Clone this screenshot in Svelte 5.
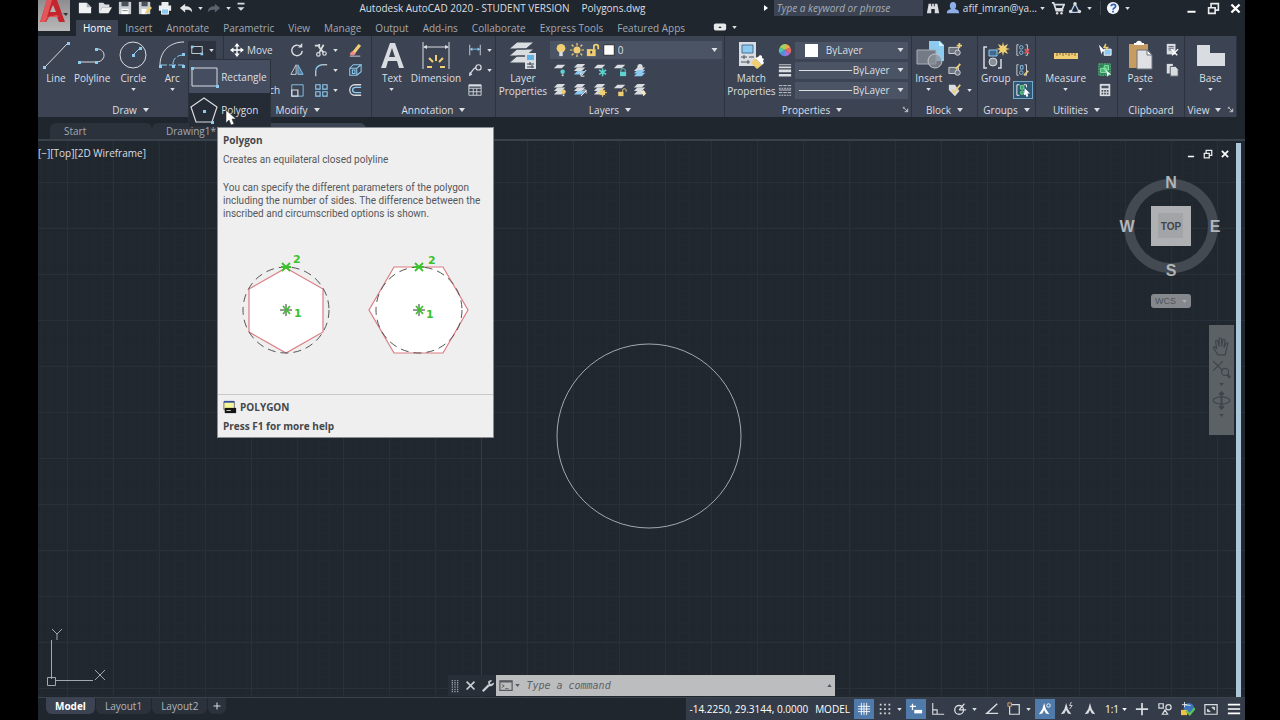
<script>
    const W = "#d9dce0";
    const B = "#8ccaf0";
    const Y = "#f0cf74";

    const sheet = (y, c = W) => `<path d="M5 ${y}h9l-4 4H1z" fill="${c}"/>`;
    const dot = (x, y) => `<rect x="${x - 1}" y="${y - 1}" width="3" height="3" fill="${B}"/>`;
    const bulb = (x, y, c) => `<circle cx="${x}" cy="${y}" r="2.6" fill="${c}"/><path d="M${x - 1} ${y + 3}h2v2h-2z" fill="${W}"/>`;

    // large icons are drawn on a 30 unit grid
    const large = {
        line: `<path d="M3 28 27 3" stroke="${W}"/>${dot(3, 27)}${dot(27, 3)}`,
        polyline: `<path d="M3 22h17M19 9c10-1 11 12 1 13" fill="none" stroke="${W}"/>${dot(2, 22)}${dot(19, 22)}${dot(19, 9)}`,
        circle: `<circle cx="15" cy="15" r="13" fill="none" stroke="${W}"/><path d="m15 15 7-7" stroke="${B}"/>${dot(15, 15)}${dot(22, 8)}`,
        arc: `<path d="M3 25C3 11 13 2 27 2" fill="none" stroke="${W}"/><path d="M3 25h24M16 24c0-5 4-9 10-9" stroke="${B}" fill="none" stroke-dasharray="7 2"/>${dot(3, 26)}${dot(16, 26)}${dot(26, 26)}${dot(26, 14)}`,
        text: `<path d="M4 28 13 3h5l9 25h-5l-2-7H11l-2 7zM12 17h6l-3-9z" fill="${W}"/>`,
        dimension: `<path d="M2 2v27M28 2v27M3 7h24" stroke="${W}" fill="none"/><path d="m2 7 4-2v4zM28 7l-4-2v4z" fill="${W}"/><path d="M6 27h5M19 27h5M8 18l4 4M22 18l-4 4M15 15v6" stroke="${Y}" stroke-width="2"/>`,
        layers: `<path d="M9 2h17l-8 7H1zM9 9h17l-8 7H1zM9 16h17l-8 7H1z" fill="${W}" stroke="#3c4453"/><path d="M17 13h11v16H17z" fill="${W}"/><path d="M19 15h7v5h-7z" fill="#5fb2e2"/><path d="M19 24h7M19 27h7M22 22v3M24 25v3" stroke="#3c4453"/>`,
        match: `<path d="M3 2h17v24H3z" fill="${W}"/><path d="M6 5h11v8H6z" fill="${B}" stroke="#47719a"/><path d="M5 17h6M13 17h5M5 22h9M8 15v4M12 20v4" stroke="#4b5260"/><path d="m15 23 4-5 7 7-5 4z" fill="${Y}"/><path d="m19 18 3-1 2-2 2 1v2l2 1-1 2 1 2-2 2z" fill="#fff"/>`,
        insert: `<path d="M15 1h11l4 4v16H15z" fill="${B}"/><path d="M25 1v5h5" fill="#d8eefb"/><path d="M3 10h19v14H3z" fill="#747b86" stroke="#a9afb7"/><circle cx="21" cy="21" r="7" fill="#8b919a" fill-opacity=".7" stroke="#c1c5ca"/>`,
        group: `<path d="M6 7H3v21h3M17 28h3v-9" fill="none" stroke="${W}" stroke-width="1.5"/><path d="M8 10h8v6H8z" fill="#42688c" stroke="${B}"/><circle cx="12" cy="22" r="4" fill="#8a9099" stroke="${W}"/><path d="m22 2 1 4 4-2-2 4 4 1-4 1 2 4-4-2-1 4-1-4-4 2 2-4-4-1 4-1-2-4 4 2z" fill="${Y}"/>`,
        measure: `<path d="M3 13h24v6H3z" fill="${Y}"/><path d="M6 13v3M9 13v2M12 13v3M15 13v2M18 13v3M21 13v2M24 13v3" stroke="#7e6534"/>`,
        paste: `<path d="M4 4h19v24H4z" fill="#c79c62"/><path d="M9 5V3h2c1-3 5-3 6 0h2v2z" fill="#fff"/><path d="M12 10h11l4 5v14H12z" fill="#dfe1e5" stroke="#6d737c"/><path d="M22 10v5h5z" fill="#fff" stroke="#6d737c"/>`,
        base: `<path d="M1 5h13v8h15v13H1z" fill="${W}"/>`,
        rectangle: `<path d="M3 6h25v18H3z" fill="none" stroke="${W}"/>${dot(3, 6)}${dot(28, 24)}`,
        polygon: `<path d="M15 3 28 12 23 27H7L2 12z" fill="none" stroke="${W}" stroke-width="1.2"/>${dot(15, 16)}${dot(23, 27)}`
    };

    // small icons are drawn on a 16 unit grid
    const small = {
        fresh: `<path d="M1 2h9l5 5v7H1z" fill="#eef0f1"/><path d="M10 2v5h5" fill="#aab0b8"/>`,
        open: `<path d="M1 2h5l2 2h5v3H5l-3 6H1z" fill="${W}"/><path d="M5 7h11l-4 7H1z" fill="#eceef0"/>`,
        save: `<path d="M1 1h14v14H1z" fill="#c9ccd1"/><path d="M4 1h8v5H4z" fill="#4b515b"/><path d="M4 9h8v6H4z" fill="#fff"/><path d="M5 11h6" stroke="#777"/>`,
        saveas: `<path d="M1 1h13v14H1z" fill="#c9ccd1"/><path d="M4 1h7v5H4z" fill="#4b515b"/><path d="M4 9h6v6H4z" fill="#fff"/><path d="m8 15 1-4 5-5 2 2-5 5z" fill="${Y}"/>`,
        print: `<path d="M4 1h8v4H4zM1 5h14v6H1z" fill="#eceef0"/><path d="M4 9h8v6H4z" fill="${B}" stroke="#fff"/>`,
        undo: `<path d="M1 8 7 3v3c5 0 8 2 8 7-2-3-4-3-8-3v3z" fill="#e4e6e8"/>`,
        redo: `<path d="M15 8 9 3v3c-5 0-8 2-8 7 2-3 4-3 8-3v3z" fill="#5b626d"/>`,
        custom: `<path d="M4 3h8" stroke="${W}" stroke-width="2"/><path d="M4 7h8l-4 4z" fill="${W}"/>`,
        binoculars: `<path d="M3 3h3v3h1V3h2v3h1V3h3l2 11h-5V9H6v5H1z" fill="${W}"/>`,
        user: `<path d="M8 1c5 0 4 7 2 8 4 1 5 2 5 5H1c0-3 1-4 5-5-2-1-3-8 2-8z" fill="#8eaee9"/>`,
        cart: `<path d="M1 2h2l3 9h8M4 4h11l-2 5H6" fill="none" stroke="${W}" stroke-width="2"/><circle cx="7" cy="14" r="1.4" fill="${W}"/><circle cx="12" cy="14" r="1.4" fill="${W}"/>`,
        exchange: `<path d="M8 3 3 13h10z" fill="none" stroke="#b8cdf2" stroke-width="1.500"/><circle cx="8" cy="3" r="2" fill="${W}"/><circle cx="3" cy="12" r="2" fill="${W}"/><circle cx="13" cy="12" r="2" fill="${W}"/>`,
        help: `<circle cx="8" cy="8" r="7" fill="#f4f6fa"/><path d="M6 6c0-3 5-3 5 0 0 2-3 2-3 4M8 11v2" fill="none" stroke="#3360b8" stroke-width="2"/>`,
        min: `<path d="M3 12h10" stroke="#fff" stroke-width="2.4"/>`,
        restore: `<path d="M2 7h8v7H2zM5 7V2h9v8h-4" fill="none" stroke="#e8eaec" stroke-width="2"/>`,
        close: `<path d="m3 3 10 10M13 3 3 13" stroke="#fff" stroke-width="2.8"/>`,
        pill: `<rect x="1" y="4" width="14" height="8" rx="2" fill="#e6e8ea"/><path d="M6 9h4L8 7z" fill="#222"/>`,
        rect: `<path d="M2 4h12v8H2z" fill="none" stroke="${W}"/>${dot(2, 4)}${dot(13, 12)}`,
        move: `<path d="M8 2v12M2 8h12" stroke="#fff" stroke-width="1.5"/><path d="m8 0 3 4H5zM8 16l3-4H5zM0 8l4-3v6zM16 8l-4-3v6z" fill="#fff"/>`,
        copy: `<circle cx="6" cy="6" r="4" fill="none" stroke="${W}"/><circle cx="10" cy="10" r="4" fill="none" stroke="${B}"/>`,
        stretch: `<path d="M2 4h8v8H2zM10 8h5" fill="none" stroke="${B}"/>`,
        rotate: `<path d="M12 4A6 6 0 1 0 14 9" fill="none" stroke="${W}" stroke-width="1.6"/><path d="M9 5h5V0z" fill="${W}"/>`,
        trim: `<path d="M6 1v4l5 6M11 2 6 11M1 3h6" fill="none" stroke="${W}" stroke-width="2"/><circle cx="5" cy="13" r="2" fill="none" stroke="${W}" stroke-width="1.4"/><circle cx="12" cy="12" r="2" fill="none" stroke="${W}" stroke-width="1.4"/>`,
        erase: `<path d="m5 10 7-9 3 2-7 9z" fill="${Y}"/><path d="m2 12 3-3 4 3-2 2H3z" fill="#ef8b83"/><path d="M2 15h12" stroke="${W}"/>`,
        mirror: `<path d="M7 2v11H1z" fill="none" stroke="${W}"/><path d="M9 2v11h6z" fill="#4e7ea5" stroke="${B}"/>`,
        fillet: `<path d="M2 15V9" stroke="${W}" stroke-width="1.3"/><path d="M2 9c0-4 3-6 7-7" fill="none" stroke="${B}" stroke-width="1.5"/><path d="M9 2h6" stroke="${W}" stroke-width="1.3"/>`,
        box: `<path d="M2 6h8v8H2zM2 6l4-4h9l-5 4M10 14l5-4V2M5 8h3v4H5z" fill="none" stroke="${B}" stroke-width="1.2"/>`,
        scale: `<path d="M2 2h13v13H2z" fill="none" stroke="${B}"/><path d="M2 8h7v7H2z" fill="none" stroke="${W}" stroke-width="1.4"/>`,
        array: `<path d="M2 2h5v5H2zM10 2h5v5h-5zM2 10h5v5H2zM10 10h5v5h-5z" fill="none" stroke="${B}" stroke-width="1.3"/>`,
        offset: `<path d="M15 2H8c-8 0-8 12 0 12h7" fill="none" stroke="${W}" stroke-width="1.5"/><path d="M15 5H9c-5 0-5 6 0 6h6" fill="none" stroke="${B}" stroke-width="1.5"/>`,
        linear: `<path d="M2 2v12M14 2v12" stroke="${W}"/><path d="M3 7h10" stroke="${B}"/><path d="m2 7 3-2v4zM14 7l-3-2v4z" fill="${B}"/>`,
        leader: `<circle cx="12" cy="5" r="3" fill="none" stroke="${W}" stroke-width="1.4"/><path d="M9 5C6 6 5 9 2 13" fill="none" stroke="${W}" stroke-width="1.4"/><path d="m1 15 1-5 3 3z" fill="${W}"/>`,
        table: `<path d="M1 2h14v12H1zM1 6h14M1 10h14M6 6v8M10 6v8" fill="none" stroke="${W}"/><path d="M1 2h14v2H1z" fill="${W}"/>`,
        bulb: `<circle cx="8" cy="6" r="5" fill="${Y}"/><path d="M6 10h4v5H6z" fill="${W}"/>`,
        sun: `<circle cx="8" cy="8" r="4" fill="${Y}"/><path d="M8 0v3M8 13v3M0 8h3M13 8h3M2 2l2 2M12 12l2 2M14 2l-2 2M4 12l-2 2" stroke="${Y}" stroke-width="1.4"/>`,
        unlock: `<path d="M1 7h10v8H1z" fill="${Y}"/><path d="M9 7V4c0-3 5-3 5 0v3" fill="none" stroke="${Y}" stroke-width="2"/><path d="M6 9v3" stroke="#3c4453" stroke-width="2"/>`,
        swatch: `<path d="M2 2h12v12H2z" fill="#fff" stroke="#222"/>`,
        lyOff: sheet(2) + bulb(11, 10, "#5fd2cf"),
        lyIso: sheet(1) + sheet(5) + sheet(9, B) + `<path d="m15 8-5 6M9 11v4h4" stroke="#fff" fill="none"/>`,
        lyFreeze: sheet(2) + `<path d="M11 6v9M7 8l8 5M15 8l-8 5" stroke="#5fd2cf" stroke-width="1.8"/>`,
        lyLock: sheet(2) + `<path d="M8 10h7v5H8z" fill="#5fd2cf"/><path d="M9 10V8c0-2 5-2 5 0v2" fill="none" stroke="#5fd2cf"/>`,
        lyCurrent: sheet(5) + sheet(8, B) + sheet(11, B) + `<circle cx="8" cy="4" r="3" fill="${W}"/>`,
        lyOn: sheet(1) + sheet(5) + sheet(9) + bulb(12, 10, Y),
        lyUniso: sheet(1) + sheet(5) + sheet(9, B) + `<path d="m9 15 6-6M11 8h4v4" stroke="#fff" fill="none"/>`,
        lyThaw: sheet(1) + sheet(5) + sheet(9) + `<circle cx="11" cy="11" r="3" fill="${Y}"/><path d="M11 6v10M6 11h10M8 8l6 6M14 8l-6 6" stroke="${Y}"/>`,
        lyUnlock: sheet(2) + `<path d="M6 10h6v5H6z" fill="${Y}"/><path d="M11 10V8c0-2 4-2 4 0v2" fill="none" stroke="${Y}"/>`,
        lyMatch: sheet(1) + sheet(5) + sheet(9) + `<path d="m9 9 3-1 3 4-3 3z" fill="#f5e7c2"/>`,
        wheel: `<path d="M8 8V1a7 7 0 0 1 6 4z" fill="#f2a64e"/><path d="m8 8 6-3a7 7 0 0 1 0 7z" fill="#e8695d"/><path d="m8 8 6 4a7 7 0 0 1-6 3z" fill="#b46ad0"/><path d="M8 8v7a7 7 0 0 1-6-3z" fill="#5a8be0"/><path d="m8 8-6 4a7 7 0 0 1 0-7z" fill="#4fc3b5"/><path d="M8 8 2 5a7 7 0 0 1 6-4z" fill="#9ed45f"/>`,
        weights: `<path d="M1 2h14" stroke="${W}"/><path d="M1 5h14" stroke="${W}" stroke-width="2"/><path d="M1 9h14M1 14h14" stroke="${W}" stroke-width="3"/>`,
        dashes: `<path d="M1 3h14M1 11h14" stroke="${W}" stroke-dasharray="4 1"/><path d="M1 6h14M1 14h14" stroke="${W}" stroke-dasharray="2 1"/><path d="M1 8h14" stroke="${W}"/>`,
        blkNew: `<path d="M1 5h11v7H1z" fill="#6f7681" stroke="${W}"/><circle cx="11" cy="11" r="3" fill="#6f7681" stroke="${W}"/><path d="M13 0v6M10 3h6" stroke="${Y}" stroke-width="2"/>`,
        blkEdit: `<path d="M1 5h11v7H1z" fill="#6f7681" stroke="${W}"/><circle cx="11" cy="11" r="3" fill="#6f7681" stroke="${W}"/><path d="m9 7 5-6" stroke="${Y}" stroke-width="2"/>`,
        blkAttr: `<path d="M1 2h7l5 7-5 6-7-7z" fill="${W}"/><path d="m5 8 2 3 7-9" stroke="${Y}" stroke-width="2" fill="none"/>`,
        ungroup: `<path d="M3 2H1v12h2M11 2h2v12h-2" fill="none" stroke="${W}"/><circle cx="6" cy="5" r="2" fill="none" stroke="${B}"/><circle cx="6" cy="11" r="2" fill="none" stroke="${B}"/><path d="m10 7 5 5M15 7l-5 5" stroke="#e2565c" stroke-width="2"/>`,
        grpEdit: `<path d="M3 2H1v12h2M10 2h2v12h-2" fill="none" stroke="${W}"/><path d="M5 3h3v4H5z" fill="none" stroke="${B}"/><circle cx="6" cy="11" r="2" fill="none" stroke="${B}"/><path d="m9 14 5-5" stroke="${Y}" stroke-width="2"/>`,
        grpSel: `<path d="M4 2H1v12h3M9 2h3v3" fill="none" stroke="#fff"/><path d="M5 3h4v4H5z" fill="#3b9d61" stroke="#78dd93"/><circle cx="7" cy="11" r="2" fill="#3b9d61" stroke="#78dd93"/><path d="m10 6 6 6h-3l1 3-2 1-1-3-2 1z" fill="#fff"/>`,
        quick: `<path d="m1 2 7 7-3 1-1 3z" fill="#fff"/><path d="M7 7h8v7H7z" fill="${B}" stroke="#fff"/><path d="m9 1-2 4h4L9 8" fill="none" stroke="${Y}" stroke-width="1.6"/>`,
        selAll: `<path d="M1 1h13v13H1z" fill="#2f7c55" stroke="#5bd68a" stroke-dasharray="2 1"/><path d="M3 6h6v5H3zM7 3h5v5H7z" fill="#48b273" stroke="#8cefb0"/><path d="m9 8 6 5h-3l-1 3z" fill="#fff"/>`,
        calc: `<path d="M2 1h12v14H2z" fill="${W}"/><path d="M4 3h8v3H4zM4 8h2v2H4zM7 8h2v2H7zM10 8h2v2h-2zM4 11h2v2H4zM7 11h2v2H7zM10 11h2v2h-2z" fill="#4a5160"/>`,
        cut: `<path d="M2 1h10v12H2z" fill="${W}"/><path d="M4 4h6M4 6h6M4 8h4" stroke="#555c68"/><path d="m7 7 7 7M15 7l-7 7" stroke="#fff" stroke-width="1.5"/>`,
        clipCopy: `<path d="M2 1h7v11H2z" fill="${W}"/><path d="M6 4h6l3 3v8H6z" fill="${W}" stroke="#4a5160"/>`,
        launch: `<path d="M3 3h3M3 3v3M5 5l7 7M13 6v7H6" fill="none" stroke="${W}" stroke-width="2"/>`,
        wrench: `<path d="m2 14 7-7" stroke="#c9cdd2" stroke-width="2.6"/><path d="M8 3c2-2 4-2 5-1l-3 2 1 2 4-2c0 3-3 5-6 4z" fill="#c9cdd2"/>`,
        x: `<path d="m3 3 9 9M12 3l-9 9" stroke="#c9cdd2" stroke-width="2"/>`,
        grip: `<path d="M5 1v14M8 1v14M11 1v14" stroke="#9aa0a8" stroke-width="1.5" stroke-dasharray="1.5 1"/>`,
        prompt: `<path d="M1 2h14v11H1z" fill="none" stroke="#565b61" stroke-width="1.4"/><path d="M1 2h14v2H1z" fill="#565b61"/><path d="m3 6 3 2-3 2M7 11h4" fill="none" stroke="#565b61"/>`,
        grid: `<path d="M5 1v14M8 1v14M11 1v14M1 5h14M1 8h14M1 11h14" stroke="#fff"/>`,
        snap: `<path d="M2 3h13M2 8h13M2 13h13" stroke="${W}" stroke-width="2" stroke-dasharray="2 3"/>`,
        dynamic: `<path d="M4 2v7M1 5h7" stroke="#fff" stroke-width="1.5"/><path d="M6 9h9v4H6z" fill="#fff"/>`,
        ortho: `<path d="M2 1v13h13M2 9h5v5" fill="none" stroke="${W}" stroke-width="1.3"/>`,
        polar: `<circle cx="7" cy="9" r="5" fill="none" stroke="${W}" stroke-width="1.5"/><path d="M7 9h8M7 9l6-7" stroke="${W}" stroke-width="1.4"/>`,
        track: `<path d="M14 2 2 13h13" fill="none" stroke="${W}" stroke-width="1.6"/>`,
        osnap: `<path d="M3 3h11v11H3z" fill="none" stroke="${W}" stroke-width="1.4"/><path d="M1 1h4v4H1z" fill="#3c4453" stroke="#e2a468"/>`,
        annoVis: `<path d="m7 1 2 7 4 6-4-1-2-4-2 4-4 1 4-6z" fill="#fff"/><circle cx="12" cy="4" r="2" fill="none" stroke="#fff"/>`,
        annoAuto: `<path d="m7 1 2 7 4 6-4-1-2-4-2 4-4 1 4-6z" fill="${W}"/><path d="m13 0-2 4h3l-3 4" stroke="${W}" fill="none"/>`,
        annoScale: `<path d="m8 1 2 7 4 6-4-1-2-4-2 4-4 1 4-6z" fill="${W}"/>`,
        plus: `<path d="M8 1v14M1 8h14" stroke="${W}" stroke-width="2"/>`,
        shapes: `<path d="M1 2h5v5H1zM8 9l3 5H5z" fill="none" stroke="${W}" stroke-width="1.4"/><circle cx="12" cy="6" r="3" fill="none" stroke="${W}" stroke-width="1.4"/>`,
        perf: `<circle cx="9" cy="7" r="6" fill="#3a74bb"/><path d="M4 0v6M1 3h6M4 3l7 1" stroke="#e8eef6"/><path d="M0 9h7v6H0z" fill="#f3bf45"/><path d="m6 10 4 4 6-7" fill="none" stroke="#5fc25d" stroke-width="2.6"/>`,
        screen: `<path d="M1 3h14v11H1z" fill="none" stroke="${W}" stroke-width="1.4"/><path d="M4 11V8l3 3zM12 6v3L9 6z" fill="${W}" stroke="${W}"/>`,
        menu: `<path d="M1 3h14M1 8h14M1 13h14" stroke="#fff" stroke-width="1.8"/>`,
        hand: `<path d="m5 15-4-6c0-1 2-1 3 1L3 4c0-2 2-1 2 0l1 4V2c0-2 2-1 2 0v6l1-5c0-2 2-1 2 0l-1 6 2-4c1-1 2 0 1 2l-2 8z" fill="none" stroke="#3e444b"/>`,
        zoom: `<path d="m1 1 8 8M9 1 1 9" stroke="#3e444b"/><circle cx="11" cy="10" r="3" fill="none" stroke="#3e444b"/><path d="m13 12 2 3" stroke="#3e444b" stroke-width="2"/>`,
        orbit: `<path d="M8 1v14M6 3l2-2 2 2M6 13l2 2 2-2" fill="none" stroke="#3e444b" stroke-width="1.6"/><ellipse cx="8" cy="8" rx="7" ry="3" fill="none" stroke="#3e444b"/>`,
        cmd: `<path d="M1 2h12v9H1z" fill="#f5f79a" stroke="#667"/><path d="M1 1h12v2H1z" fill="#35509a"/><path d="M2 9h13v6H2z" fill="#151515"/><path d="M4 12h5" stroke="#ddd"/>`
    };

    const fileTools = ["fresh", "open", "save", "saveas", "print"];
    const ribbonTabs = ["Home", "Insert", "Annotate", "Parametric", "View", "Manage", "Output", "Add-ins", "Collaborate", "Express Tools", "Featured Apps"];
    const layerTools = [
        ["lyOff", "lyIso", "lyFreeze", "lyLock", "lyCurrent"],
        ["lyOn", "lyUniso", "lyThaw", "lyUnlock", "lyMatch"]
    ];
    const lineProps = [
        { icon: "weights", label: "Lineweight" },
        { icon: "dashes", label: "Linetype" }
    ];

    let activeTab = $state("Home");
    let activeLayout = $state("Model");
    let command = $state("");
    let query = $state("");
</script>

{#snippet sm(name)}
    <svg class="sm" viewBox="0 0 16 16" aria-hidden="true">{@html small[name]}</svg>
{/snippet}

{#snippet caret()}
    <svg class="caret" viewBox="0 0 6 4" aria-hidden="true"><path d="M0 0h6L3 4z" fill="currentColor" /></svg>
{/snippet}

{#snippet big(icon, label, more)}
    <button class="big">
        <svg class="lg" viewBox="0 0 30 30" aria-hidden="true">{@html large[icon]}</svg>
        <span>{label}</span>
        {#if more}{@render caret()}{/if}
    </button>
{/snippet}

{#snippet tool(name, more, on)}
    <button class="tool" class:on class:more aria-label={name}>
        {@render sm(name)}
        {#if more}{@render caret()}{/if}
    </button>
{/snippet}

{#snippet title(text, more, launcher)}
    <div class="panel-title">
        <button>{text}{#if more}<svg class="drop" viewBox="0 0 6 4" aria-hidden="true"><path d="M0 0h6L3 4z" fill="currentColor" /></svg>{/if}</button>
        {#if launcher}
            <button class="launcher" aria-label="{text} settings">{@render sm("launch")}</button>
        {/if}
    </div>
{/snippet}

<div class="app">
    <header>
        <button class="logo" aria-label="Application menu">
            <svg viewBox="0 0 32 31" aria-hidden="true">
                <path d="M2 22 9 0h10l8 22h-6l-2-5h-8l-3 5z" fill="#c4262e" />
                <path d="M2 22 9 0h5L9 17l10-2 2 2H10l-3 5z" fill="#e4555a" />
                <path d="m12 12 3-7 3 7z" fill="#b9b4b4" />
                <path d="M25 13h5l-2 3z" fill="#333" />
            </svg>
        </button>
        <div class="titlebar">
            <div class="quick">
                {#each fileTools as name}{@render tool(name)}{/each}
                {@render tool("undo", true)}
                {@render tool("redo", true)}
                {@render tool("custom")}
            </div>
            <div class="caption">
                <span>Autodesk AutoCAD 2020 - STUDENT VERSION</span>
                <span>Polygons.dwg</span>
            </div>
            <svg class="expand" viewBox="0 0 4 6" aria-hidden="true"><path d="M0 0v6l4-3z" fill="#fff" /></svg>
            <input class="search" type="text" aria-label="Search" placeholder="Type a keyword or phrase" bind:value={query} />
            <div class="account">
                {@render tool("binoculars")}
                <button class="user">{@render sm("user")}<span>afif_imran@ya...</span>{@render caret()}</button>
                {@render tool("cart")}
                {@render tool("exchange", true)}
                <i></i>
                {@render tool("help", true)}
            </div>
            <div class="window">
                {@render tool("min")}{@render tool("restore")}{@render tool("close")}
            </div>
        </div>
        <nav class="tabs">
            {#each ribbonTabs as tab}
                <button class:active={tab === activeTab} onclick={() => (activeTab = tab)}>{tab}</button>
            {/each}
            <div class="pill">{@render tool("pill", true)}</div>
        </nav>
    </header>

    <section class="ribbon">
        <div class="panel">
            <div class="body draw">
                {@render big("line", "Line")}
                {@render big("polyline", "Polyline")}
                {@render big("circle", "Circle", true)}
                {@render big("arc", "Arc", true)}
                <div class="shape">
                    {@render tool("rect", true)}
                    <div class="menu">
                        <button><svg class="lg" viewBox="0 0 30 30" aria-hidden="true">{@html large.rectangle}</svg>Rectangle</button>
                        <button class="hover"><svg class="lg" viewBox="0 0 30 30" aria-hidden="true">{@html large.polygon}</svg>Polygon</button>
                        <svg class="pointer" viewBox="0 0 12 18" aria-hidden="true">
                            <path d="M1 1v13l3-3 2 5 3-1-2-5h4z" fill="#fff" stroke="#333" stroke-width=".6" />
                        </svg>
                    </div>
                </div>
            </div>
            {@render title("Draw", true)}
        </div>

        <div class="panel">
            <div class="body modify">
                <div class="col named">
                    <button>{@render sm("move")}Move</button>
                    <button aria-label="Copy">{@render sm("copy")}</button>
                    <button>{@render sm("stretch")}Stretch</button>
                </div>
                <div class="col">{@render tool("rotate")}{@render tool("mirror")}{@render tool("scale")}</div>
                <div class="col">{@render tool("trim", true)}{@render tool("fillet", true)}{@render tool("array", true)}</div>
                <div class="col">{@render tool("erase")}{@render tool("box")}{@render tool("offset")}</div>
            </div>
            {@render title("Modify", true)}
        </div>

        <div class="panel">
            <div class="body annotation">
                {@render big("text", "Text", true)}
                {@render big("dimension", "Dimension")}
                <div class="col">{@render tool("linear", true)}{@render tool("leader", true)}{@render tool("table")}</div>
            </div>
            {@render title("Annotation", true)}
        </div>

        <div class="panel">
            <div class="body layers">
                {@render big("layers", "Layer Properties")}
                <div class="col">
                    <div class="combo layer">
                        {@render sm("bulb")}{@render sm("sun")}{@render sm("unlock")}{@render sm("swatch")}
                        <select aria-label="Layer"><option>0</option></select>
                        {@render caret()}
                    </div>
                    {#each layerTools as row}
                        <div class="row">{#each row as name}{@render tool(name)}{/each}</div>
                    {/each}
                </div>
            </div>
            {@render title("Layers", true)}
        </div>

        <div class="panel">
            <div class="body properties">
                {@render big("match", "Match Properties")}
                <div class="col">
                    <div class="prop">
                        {@render sm("wheel")}
                        <div class="combo">
                            <span class="white"></span>
                            <select aria-label="Object color"><option>ByLayer</option></select>
                            {@render caret()}
                        </div>
                    </div>
                    {#each lineProps as prop}
                        <div class="prop">
                            {@render sm(prop.icon)}
                            <div class="combo">
                                <span class="stroke"></span>
                                <select aria-label={prop.label}><option>ByLayer</option></select>
                                {@render caret()}
                            </div>
                        </div>
                    {/each}
                </div>
            </div>
            {@render title("Properties", true, true)}
        </div>

        <div class="panel">
            <div class="body block">
                {@render big("insert", "Insert", true)}
                <div class="col">{@render tool("blkNew")}{@render tool("blkEdit")}{@render tool("blkAttr", true)}</div>
            </div>
            {@render title("Block", true)}
        </div>

        <div class="panel">
            <div class="body groups">
                {@render big("group", "Group")}
                <div class="col">{@render tool("ungroup")}{@render tool("grpEdit")}{@render tool("grpSel", false, true)}</div>
            </div>
            {@render title("Groups", true)}
        </div>

        <div class="panel">
            <div class="body utilities">
                {@render big("measure", "Measure", true)}
                <div class="col">{@render tool("quick")}{@render tool("selAll")}{@render tool("calc")}</div>
            </div>
            {@render title("Utilities", true)}
        </div>

        <div class="panel">
            <div class="body clipboard">
                {@render big("paste", "Paste", true)}
                <div class="col">{@render tool("cut")}{@render tool("clipCopy")}</div>
            </div>
            {@render title("Clipboard")}
        </div>

        <div class="panel">
            <div class="body">
                {@render big("base", "Base", true)}
            </div>
            {@render title("View", true, true)}
        </div>
    </section>

    <nav class="files">
        <button>Start</button>
        <button>Drawing1*</button>
        <button class="current" aria-label="Polygons"></button>
    </nav>

    <main>
        <svg class="drawing" aria-hidden="true">
            <defs>
                <pattern id="minor" x="29" y="41" width="9" height="9" patternUnits="userSpaceOnUse">
                    <path d="M0 .5h9M.5 0v9" stroke="#222931" />
                </pattern>
                <pattern id="major" x="29" y="41" width="46" height="46" patternUnits="userSpaceOnUse">
                    <path d="M0 .5h46M.5 0v46" stroke="#28313a" />
                </pattern>
            </defs>
            <rect width="100%" height="100%" fill="url(#minor)" />
            <rect width="100%" height="100%" fill="url(#major)" />
            <path d="M443.500 0v2000" stroke="#28452f" />
            <circle cx="611" cy="295" r="92" fill="none" stroke="#a3a8ad" />
        </svg>

        <button class="view-label">[−][Top][2D Wireframe]</button>
        <div class="doc-window">
            {@render tool("min")}{@render tool("restore")}{@render tool("close")}
        </div>

        <svg class="cube" viewBox="0 0 104 110" role="img" aria-label="View cube">
            <circle cx="52" cy="54" r="42" fill="none" stroke="#444a51" stroke-width="10" />
            <path d="M32 34h40v40H32z" fill="#aeb0b2" />
            <path d="M39 41h25v25H39z" fill="#a2a4a8" />
            <text x="52" y="58" class="top">TOP</text>
            <text x="52" y="16">N</text>
            <text x="52" y="104">S</text>
            <text x="8" y="60">W</text>
            <text x="96" y="60">E</text>
        </svg>
        <button class="wcs">WCS {@render caret()}</button>
        <div class="navbar">
            {@render tool("hand")}{@render tool("zoom")}{@render caret()}{@render tool("orbit")}{@render caret()}
        </div>
        <div class="scroll"></div>

        <svg class="ucs" viewBox="0 0 62 62" aria-hidden="true">
            <path d="M5.500 52V13M10 53.500h37M1.500 50.500h8v8h-8zM6 2l5 5 5-5M11 7v6M49 43l10 10M59 43 49 53" fill="none" stroke="#a3a8ad" />
        </svg>

        <div class="command">
            <div class="command-tools">{@render sm("grip")}{@render tool("x")}{@render tool("wrench")}</div>
            <div class="command-line">
                <button aria-label="Recent commands">{@render sm("prompt")}{@render caret()}</button>
                <input type="text" aria-label="Command" placeholder="Type a command" bind:value={command} />
                <button class="up" aria-label="Command history">{@render caret()}</button>
            </div>
        </div>
    </main>

    <footer>
        <nav class="layouts">
            {#each ["Model", "Layout1", "Layout2"] as name}
                <button class:active={name === activeLayout} onclick={() => (activeLayout = name)}>{name}</button>
            {/each}
            <button aria-label="New layout">{@render sm("plus")}</button>
        </nav>
        <div class="status">
            <button class="coords">-14.2250, 29.3144, 0.0000</button>
            <button class="space">MODEL</button>
            {@render tool("grid", false, true)}
            {@render tool("snap", true)}
            {@render tool("dynamic", false, true)}
            {@render tool("ortho")}
            {@render tool("polar", true)}
            {@render tool("track")}
            {@render tool("osnap", true)}
            {@render tool("annoVis", false, true)}
            {@render tool("annoAuto")}
            {@render tool("annoScale")}
            <button class="ratio">1:1{@render caret()}</button>
            {@render tool("plus")}
            {@render tool("shapes")}
            {@render tool("perf")}
            {@render tool("screen")}
            {@render tool("menu")}
        </div>
    </footer>

    <div class="tooltip" role="tooltip">
        <div class="tip-main">
            <strong>Polygon</strong>
            <p>Creates an equilateral closed polyline</p>
            <p class="long">You can specify the different parameters of the polygon including the number of sides. The difference between the inscribed and circumscribed options is shown.</p>
            <svg viewBox="0 0 265 120" aria-hidden="true">
                <path d="M63 18 100 39v43l-37 21-37-21V39z" fill="#fff" stroke="#dc7d82" stroke-width="1.200" />
                <circle cx="63" cy="60" r="43" fill="none" stroke="#555" stroke-dasharray="8 5" />
                <path d="M171 17h49l25 43-25 43h-49l-25-43z" fill="#fff" stroke="#dc7d82" stroke-width="1.200" />
                <circle cx="196" cy="60" r="43" fill="none" stroke="#555" stroke-dasharray="8 5" />
                <path d="M57 60h12M63 54v12M190 60h12M196 54v12" stroke="#333" />
                <path d="m59 13 8 8M67 13l-8 8M58 17h10M192 13l8 8M200 13l-8 8M191 17h10M60 56l7 8M67 56l-7 8M193 56l7 8M200 56l-7 8" stroke="#3cc22c" stroke-width="1.800" />
                <text x="70" y="13">2</text>
                <text x="71" y="67">1</text>
                <text x="205" y="14">2</text>
                <text x="203" y="68">1</text>
            </svg>
        </div>
        <div class="tip-foot">
            <div>{@render sm("cmd")}<strong>POLYGON</strong></div>
            <strong>Press F1 for more help</strong>
        </div>
    </div>
</div>

<style>
    :global(body) {
        background: #000;
    }

    .app {
        position: relative;
        display: flex;
        flex-direction: column;
        min-height: 100vh;
        margin: 0 35px 0 38px;
        background: #20262e;
        color: #dcdfe3;
        font: 10px/12px "Open Sans", "Noto Sans", sans-serif;
    }

    button, input, select {
        margin: 0;
        padding: 0;
        border: 0;
        background: none;
        color: inherit;
        font: inherit;
        white-space: nowrap;
    }

    select {
        appearance: none;
        flex: 1;
        min-width: 0;
    }

    svg {
        display: block;
        flex: none;
    }

    .sm {
        width: 14px;
        height: 14px;
    }

    .lg {
        width: 30px;
        height: 30px;
    }

    .caret {
        width: 5px;
        height: 3px;
    }

    .tool {
        display: flex;
        align-items: center;
        justify-content: center;
        gap: 5px;
        min-width: 20px;
        height: 18px;
    }

    header {
        display: grid;
        grid-template-columns: 32px 1fr;
        grid-template-rows: 18px 18px;
    }

    .logo {
        grid-row: span 2;
        height: 31px;
        background: linear-gradient(#8e8e90, #b9b9ba);
    }

    .logo svg {
        width: 32px;
        height: 31px;
    }

    .titlebar {
        display: flex;
        align-items: center;
    }

    .titlebar > * {
        margin-bottom: 2px;
    }

    .quick {
        display: flex;
        padding-left: 5px;
    }

    .quick .more {
        padding-left: 4px;
    }

    .caption {
        flex: 1;
        display: flex;
        justify-content: center;
        gap: 12px;
        padding-right: 10px;
        white-space: nowrap;
    }

    .expand {
        width: 4px;
        height: 6px;
        margin-right: 6px;
    }

    .search {
        width: 149px;
        height: 16px;
        padding: 0 3px;
        box-sizing: border-box;
        background: #3c4453;
        font-style: italic;
    }

    .search::placeholder {
        color: #a6acb6;
    }

    .account {
        display: flex;
        align-items: center;
    }

    .account i {
        width: 1px;
        height: 14px;
        margin: 0 5px 0 8px;
        background: #3c434d;
    }

    .user {
        display: flex;
        align-items: center;
        gap: 3px;
        padding: 0 3px;
    }

    .window {
        display: flex;
        gap: 2px;
        margin-left: 51px;
    }

    .window .sm {
        width: 13px;
        height: 13px;
    }

    .tabs {
        display: flex;
        align-items: flex-end;
        padding-left: 6px;
    }

    .tabs > button {
        height: 16px;
        padding: 0 7px 1px;
        color: #a3a9b3;
    }

    .tabs > .active {
        background: #3c4453;
        color: #fff;
    }

    .pill {
        margin-left: 21px;
    }

    .ribbon {
        display: grid;
        grid-template-columns: 186fr 148fr 124fr 229fr 187fr 66fr 58fr 82fr 67fr 52fr;
        margin-right: 8px;
        background: #3c4453;
    }

    .panel {
        min-width: 0;
        border-right: 1px solid #2c333e;
    }

    .body {
        display: grid;
        height: 62px;
        padding-top: 4px;
    }

    .draw { grid-template-columns: 36fr 37fr 46fr 32fr 35fr; }
    .modify { grid-template-columns: 63fr 25fr 34fr 26fr; }
    .annotation { grid-template-columns: 40fr 49fr 35fr; }
    .layers { grid-template-columns: 54fr 175fr; }
    .properties { grid-template-columns: 53fr 134fr; }
    .block { grid-template-columns: 34fr 32fr; }
    .groups { grid-template-columns: 36fr 22fr; }
    .utilities { grid-template-columns: 60fr 22fr; }
    .clipboard { grid-template-columns: 45fr 22fr; }

    .big {
        display: flex;
        flex-direction: column;
        align-items: center;
        min-width: 0;
        line-height: 13px;
    }

    .big span {
        margin: 2px 0 3px;
        white-space: pre-wrap;
    }

    .layers .big span, .properties .big span {
        width: min-content;
    }

    .col {
        display: flex;
        flex-direction: column;
        gap: 2px;
        min-width: 0;
        padding-top: 1px;
    }

    .col > .tool {
        align-self: flex-start;
        padding: 0 3px;
    }

    .annotation .col {
        padding-left: 5px;
    }

    .tool.on {
        background: #2f5875;
        outline: 1px solid #74a9cd;
        outline-offset: -1px;
    }

    .named {
        padding-left: 6px;
    }

    .named button {
        display: flex;
        align-items: center;
        gap: 3px;
        height: 18px;
    }

    .row {
        display: flex;
    }

    .combo {
        display: flex;
        align-items: center;
        flex: 1;
        min-width: 0;
        height: 17px;
        padding: 0 4px;
        background: #4a5465;
    }

    .combo.layer {
        flex: none;
        gap: 2px;
        height: 18px;
        margin-right: 2px;
    }

    .combo .caret {
        width: 7px;
        height: 4px;
    }

    .prop {
        display: flex;
        align-items: center;
        gap: 3px;
        height: 18px;
        margin-right: 3px;
    }

    .white {
        width: 13px;
        height: 13px;
        margin: 0 8px 0 6px;
        background: #fff;
    }

    .stroke {
        width: 53px;
        height: 1px;
        margin-right: 1px;
        background: #dcdfe3;
    }

    .panel-title {
        display: flex;
        height: 15px;
    }

    .panel-title button {
        display: flex;
        align-items: center;
        justify-content: center;
        flex: 1;
        gap: 6px;
    }

    .drop {
        width: 6px;
        height: 4px;
    }

    .panel-title .launcher {
        flex: none;
        width: 12px;
    }

    .launcher .sm {
        width: 7px;
        height: 7px;
    }

    .shape {
        position: relative;
    }

    .shape > .tool {
        width: 28px;
        margin-top: 1px;
        background: #2c333e;
    }

    .menu {
        position: absolute;
        z-index: 2;
        top: 19px;
        left: 0;
        width: 83px;
        padding: 1px;
        box-sizing: border-box;
        background: #2a313b;
    }

    .menu button {
        display: flex;
        align-items: center;
        gap: 2px;
        width: 100%;
        height: 33px;
        background: #454e60;
    }

    .menu .hover {
        background: #262c35;
    }

    .pointer {
        position: absolute;
        z-index: 4;
        left: 37px;
        top: 50px;
        width: 12px;
        height: 18px;
    }

    .files {
        display: flex;
        height: 16px;
        padding: 6px 0 0 12px;
        border-bottom: 2px solid #39414b;
    }

    .files button {
        width: 102px;
        padding-left: 14px;
        border-radius: 6px 6px 0 0;
        background: #2b323c;
        color: #a3a9b3;
        text-align: left;
    }

    .files .current {
        width: 112px;
        background: #3c4453;
    }

    main {
        position: relative;
        flex: 1;
        min-height: 556px;
        overflow: hidden;
        background: #20272f;
    }

    .drawing {
        position: absolute;
        width: 100%;
        height: 100%;
    }

    .view-label {
        position: absolute;
        top: 6px;
        left: 0;
    }

    .doc-window {
        position: absolute;
        top: 4px;
        right: 12px;
        display: flex;
    }

    .doc-window .tool {
        width: 17px;
        min-width: 0;
    }

    .doc-window .sm {
        width: 10px;
        height: 10px;
    }

    .cube {
        position: absolute;
        top: 31px;
        right: 22px;
        width: 104px;
        height: 110px;
    }

    .cube text {
        fill: #b2b5b8;
        font: bold 16px "Liberation Sans", sans-serif;
        text-anchor: middle;
    }

    .cube .top {
        fill: #42464b;
        font-size: 10px;
    }

    .wcs {
        position: absolute;
        top: 153px;
        right: 54px;
        display: flex;
        align-items: center;
        gap: 6px;
        height: 14px;
        padding: 0 4px;
        border-radius: 3px;
        background: #85898e;
        color: #4f545b;
        font: 9px "Liberation Sans", sans-serif;
    }

    .wcs .caret {
        color: #a9adb2;
    }

    .navbar {
        position: absolute;
        top: 184px;
        right: 11px;
        display: flex;
        flex-direction: column;
        align-items: center;
        gap: 5px;
        width: 25px;
        height: 98px;
        padding-top: 12px;
        background: #5c6166;
        color: #3e444b;
    }

    .navbar .sm {
        width: 19px;
        height: 19px;
    }

    .scroll {
        position: absolute;
        top: 2px;
        bottom: 0;
        right: 4px;
        width: 5px;
        background: #abc7d9;
    }

    .ucs {
        position: absolute;
        bottom: 8px;
        left: 8px;
        width: 62px;
        height: 62px;
    }

    .command {
        position: absolute;
        bottom: 1px;
        left: 34%;
        display: flex;
        width: 32%;
        height: 21px;
    }

    .command-tools {
        display: flex;
        align-items: center;
        background: #272e37;
    }

    .command-tools .tool {
        min-width: 17px;
    }

    .command-line {
        display: flex;
        align-items: center;
        flex: 1;
        padding: 0 3px;
        background: #bcbdbe;
        color: #565b61;
    }

    .command-line button {
        display: flex;
        align-items: center;
        gap: 2px;
    }

    .command-line input {
        flex: 1;
        min-width: 0;
        padding-left: 6px;
        font: italic 10px "DejaVu Sans Mono", monospace;
    }

    .command-line input::placeholder {
        color: #5d6166;
    }

    .up {
        transform: rotate(180deg);
    }

    footer {
        display: flex;
        justify-content: space-between;
        height: 22px;
        border-top: 1px solid #3a424c;
    }

    .layouts {
        display: flex;
        padding: 0 0 6px 8px;
    }

    .layouts button {
        padding: 0 9px;
        margin-right: 1px;
        border-radius: 0 0 6px 6px;
        background: #2b323c;
        color: #b2b7bf;
    }

    .layouts .active {
        background: #3c4453;
        color: #fff;
        font-weight: bold;
    }

    .layouts .sm {
        width: 8px;
        height: 8px;
    }

    .layouts button:last-child {
        padding: 0 5px;
    }

    .status {
        display: flex;
        align-items: center;
        gap: 1px;
        background: #343c49;
    }

    .status .tool {
        min-width: 22px;
        height: 20px;
    }

    .status .more {
        padding: 0 3px;
    }

    .status .tool.on {
        min-width: 20px;
        background: #4f7aa9;
        outline: 0;
    }

    .coords, .space, .ratio {
        display: flex;
        align-items: center;
        gap: 3px;
        height: 100%;
        padding: 0 3px;
        color: #fff;
    }

    .tooltip {
        position: absolute;
        z-index: 3;
        top: 128px;
        left: 180px;
        width: 275px;
        background: #efefef;
        color: #55575b;
        line-height: 13px;
        box-shadow: 0 0 0 1px #8a8d91;
    }

    .tip-main {
        padding: 6px 0 0 5px;
    }

    .tip-main p {
        margin: 6px 0 0;
        font-family: Roboto, "Open Sans", sans-serif;
    }

    .tip-main .long {
        margin-top: 15px;
    }

    .tip-main svg {
        width: 265px;
        height: 120px;
        margin-top: 30px;
        padding-bottom: 24px;
    }

    .tip-main text {
        fill: #3cc22c;
        font: bold 11px "DejaVu Sans", sans-serif;
    }

    .tip-foot {
        display: flex;
        flex-direction: column;
        gap: 6px;
        padding: 5px 5px 4px;
        border-top: 1px solid #c8c9cb;
    }

    .tip-foot div {
        display: flex;
        align-items: center;
        gap: 3px;
    }

    strong {
        color: #45474a;
    }
</style>
